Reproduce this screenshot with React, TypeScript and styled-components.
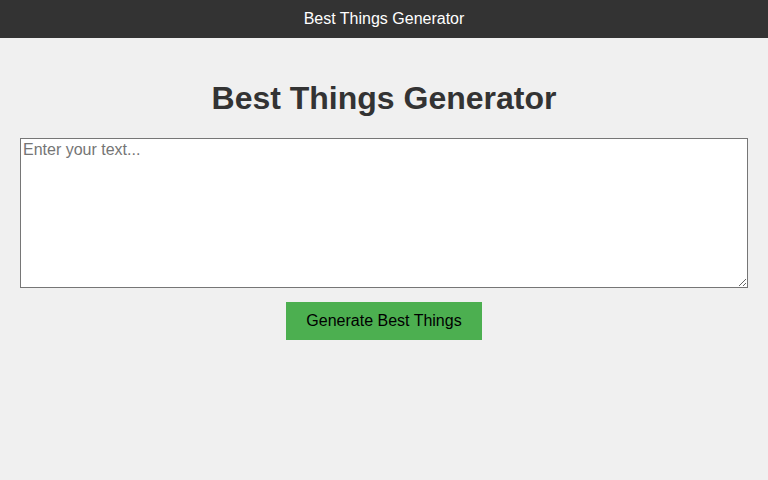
import React, { useState } from "react";
import styled, { createGlobalStyle } from "styled-components";

const GlobalStyle = createGlobalStyle`
  html, body {
    margin: 0;
    padding: 0;
    background: #f0f0f0;
    font-family: "Liberation Sans", Arial, sans-serif;
  }
`;

const Header = styled.header`
  background: #333;
  color: #fff;
  text-align: center;
  padding: 10px 0;
  font-size: 16px;
  line-height: 18px;
`;

const Main = styled.main`
  padding: 20px;
`;

const Title = styled.h1`
  margin: 22px 0 21px;
  font-size: 32px;
  line-height: 37px;
  font-weight: bold;
  color: #333;
  text-align: center;
`;

const Form = styled.div`
  display: flex;
  flex-direction: column;
  align-items: center;
  gap: 14px;
`;

const TextInput = styled.textarea`
  display: block;
  width: 100%;
  height: 150px;
  box-sizing: border-box;
  padding: 2px;
  border: 1px solid #767676;
  background: #fff;
  font-family: "Liberation Sans", Arial, sans-serif;
  font-size: 16px;
  color: #000;

  &::placeholder {
    color: #757575;
  }
`;

const GenerateButton = styled.button`
  background: #4caf50;
  color: #000;
  border: none;
  padding: 10px 20px;
  font-family: "Liberation Sans", Arial, sans-serif;
  font-size: 16px;
  line-height: 18px;
  cursor: pointer;
`;

const App: React.FC = () => {
  const [text, setText] = useState("");

  return (
    <>
      <GlobalStyle />
      <Header>Best Things Generator</Header>
      <Main>
        <Title>Best Things Generator</Title>
        <Form>
          <TextInput
            placeholder="Enter your text..."
            value={text}
            onChange={(e) => setText(e.target.value)}
          />
          <GenerateButton>Generate Best Things</GenerateButton>
        </Form>
      </Main>
    </>
  );
};

export default App;
